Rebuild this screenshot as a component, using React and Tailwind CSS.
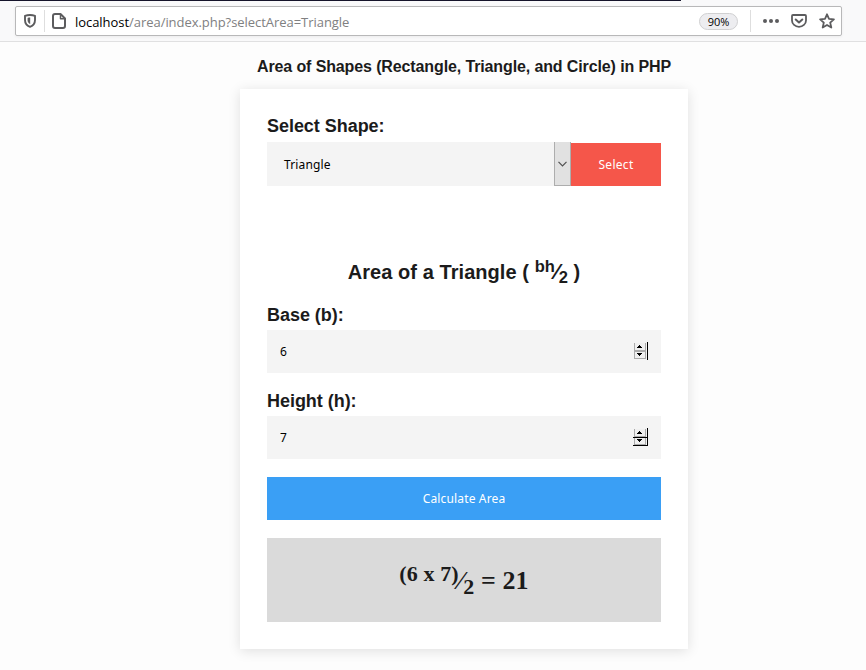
import React, { useState } from 'react';

const ShieldIcon = () => (
  <svg width="14" height="16" viewBox="0 0 14 16" fill="none">
    <path d="M7 2C5.200 2 3.500 2.300 2 2.900v4c0 3.400 1.900 5.700 5 6.900 3.100-1.200 5-3.500 5-6.900v-4C10.500 2.300 8.800 2 7 2z" stroke="#5c5c5e" strokeWidth="1.900" strokeLinejoin="round" />
    <path d="M7.200 4.500c-1 0-1.800.1-2.600.4v2.300c0 1.800.9 3 2.600 3.900z" fill="#5c5c5e" />
  </svg>
);

const PageIcon = () => (
  <svg width="14" height="16" viewBox="0 0 14 16" fill="none" stroke="#5c5c5e" strokeWidth="2" strokeLinejoin="round">
    <path d="M3 1h5.500L13 5.500V13a2 2 0 0 1-2 2H3a2 2 0 0 1-2-2V3a2 2 0 0 1 2-2z" />
    <path d="M8.500 1v4.700H13" strokeWidth="1.500" />
  </svg>
);

const PocketIcon = () => (
  <svg width="16" height="16" viewBox="0 0 16 16" fill="none" stroke="#5c5c5e" strokeWidth="2" strokeLinecap="round" strokeLinejoin="round">
    <path d="M2 2h12a1 1 0 0 1 1 1v4.500a7 6.300 0 0 1-14 0V3a1 1 0 0 1 1-1z" strokeWidth="1.800" />
    <path d="M4.700 6.500L8 9.500l3.300-3" />
  </svg>
);

const StarIcon = () => (
  <svg width="16" height="16" viewBox="0 0 16 16" fill="none" stroke="#5c5c5e" strokeWidth="1.800" strokeLinejoin="round">
    <path d="M8 1.300l2 4.500 4.900.5-3.700 3.300 1.100 4.900L8 12l-4.300 2.500 1.100-4.900L1.100 6.300 6 5.800z" />
  </svg>
);

const Spinner = ({ active }) => (
  <svg width="15" height="18" viewBox="0 0 15 18" shapeRendering="crispEdges">
    <rect x="1" y="1" width="12" height="16" fill="#f0f0f0" />
    <path d="M1 1h1v16H1zM12 1h1v16h-1zM1 8h12v2H1zM1 16h12v1H1z" fill="#ababab" />
    <path d="M6 3h1v1h1v1h1v1H4V5h1V4h1zM4 11h5v1H8v1H7v1H6v-1H5v-1H4z" fill="#000" />
    <path d="M14 0h1v18h-1z" fill="#000" />
    {active && <path d="M0 9h15v1H0zM0 17h15v1H0z" fill="#000" />}
  </svg>
);

const BrowserBar = () => (
  <div className="h-[42px] bg-[#f9f9fa] border-b border-[#e0e0e1]">
    <div className="h-px w-[681px] bg-[#15142b]" />
    <div className="mt-[5px] ml-[15px] w-[827px] h-[30px] flex items-center bg-white border border-[#b8b8b9] rounded-[2px] shadow-[0_1px_3px_rgba(0,0,0,0.06)] font-['Open_Sans',sans-serif]">
      <div className="w-[28px] flex justify-center"><ShieldIcon /></div>
      <div className="w-px h-[22px] bg-[#dedede]" />
      <div className="ml-[7px]"><PageIcon /></div>
      <div className="ml-[9px] pt-[2px] text-[13px] leading-[18px] tracking-[-0.045px] text-[#808081] whitespace-nowrap">
        <span className="text-black">localhost</span>/area/index.php?selectArea=Triangle
      </div>
      <div className="ml-auto w-[39px] h-[17px] rounded-full border border-[#d0d0d1] bg-[#ededf0] text-[11px] leading-[16px] text-center text-black">90%</div>
      <div className="ml-[12px] w-px h-[22px] bg-[#dedede]" />
      <div className="ml-[12px] flex gap-[2px]">
        <span className="size-[4px] rounded-full bg-[#5c5c5e]" />
        <span className="size-[4px] rounded-full bg-[#5c5c5e]" />
        <span className="size-[4px] rounded-full bg-[#5c5c5e]" />
      </div>
      <div className="ml-[12px]"><PocketIcon /></div>
      <div className="ml-[12px] mr-[6px]"><StarIcon /></div>
    </div>
  </div>
);

const NumberField = ({ label, value, onChange, active }) => (
  <div>
    <label className="block mb-[5px] text-[18px] leading-[20px] tracking-[-0.04px] font-bold">{label}</label>
    <div className="h-[43px] flex items-center pl-[13px] pr-[13px] bg-[#f4f4f4]">
      <input
        className="flex-1 min-w-0 bg-transparent outline-none text-black text-[12px] font-['Noto_Sans',sans-serif]"
        value={value}
        onChange={e => onChange(e.target.value)}
      />
      <div className="pb-px"><Spinner active={active} /></div>
    </div>
  </div>
);

export default function App() {
  const [base, setBase] = useState('6');
  const [height, setHeight] = useState('7');

  return (
    <div className="h-[670px] overflow-hidden bg-[#fdfdfd] text-[#1b1b1b] font-['Liberation_Sans',Arial,sans-serif]">
      <BrowserBar />

      <h1 className="mt-[15px] ml-[62px] text-center text-[16px] leading-[20px] tracking-[-0.12px] font-bold whitespace-nowrap">
        Area of Shapes (Rectangle, Triangle, and Circle) in PHP
      </h1>

      <div className="mt-[12px] ml-[240px] w-[448px] h-[560px] p-[27px] bg-white shadow-[0_2px_12px_rgba(0,0,0,0.12)]">
        {/* Shape picker */}
        <label className="block mb-[6px] text-[18px] leading-[20px] tracking-[-0.04px] font-bold">Select Shape:</label>
        <div className="flex items-end h-[44px] text-[12px] font-['Noto_Sans',sans-serif]">
          <div className="flex-1 h-[44px] flex items-center justify-between bg-[#f4f4f4] text-black">
            <span className="pl-[17px] pt-[2px] tracking-[0.14px]">Triangle</span>
            <div className="w-[17px] h-[44px] flex items-center justify-center pr-px bg-[#e1e1e1] border border-t-0 border-[#adadad]">
              <svg width="9" height="6" viewBox="0 0 9 6" fill="none" stroke="#505050" strokeWidth="1.200">
                <path d="M.5.800l4 4 4-4" />
              </svg>
            </div>
          </div>
          <button className="w-[90px] h-[43px] bg-[#f5564a] text-white tracking-[0.3px]">Select</button>
        </div>

        {/* Triangle form */}
        <h2 className="mt-[74px] mb-[21px] h-[24px] text-center text-[20px] leading-[24px] tracking-[0.06px] font-bold whitespace-nowrap">
          Area of a Triangle ( <sup className="text-[16.500px] -top-[7px]">bh</sup><span className="text-[22px] leading-none">⁄</span><sub className="text-[16.500px]">2</sub> )
        </h2>
        <div className="flex flex-col gap-[18px]">
          <NumberField label="Base (b):" value={base} onChange={setBase} />
          <NumberField label="Height (h):" value={height} onChange={setHeight} active />
          <button className="h-[43px] bg-[#3a9ff5] text-white text-[12px] tracking-[0.15px] font-['Noto_Sans',sans-serif]">Calculate Area</button>
          <div className="h-[84px] flex items-center justify-center bg-[#dadada]">
            <p className="pt-[2px] text-[26px] leading-[30px] tracking-[0.12px] font-bold whitespace-nowrap font-['Liberation_Serif',serif]">
              <sup className="text-[22px] -top-[8px]">(6 x 7)</sup>⁄<sub className="text-[22px] -bottom-[5px]">2</sub> = 21
            </p>
          </div>
        </div>
      </div>
    </div>
  );
}
